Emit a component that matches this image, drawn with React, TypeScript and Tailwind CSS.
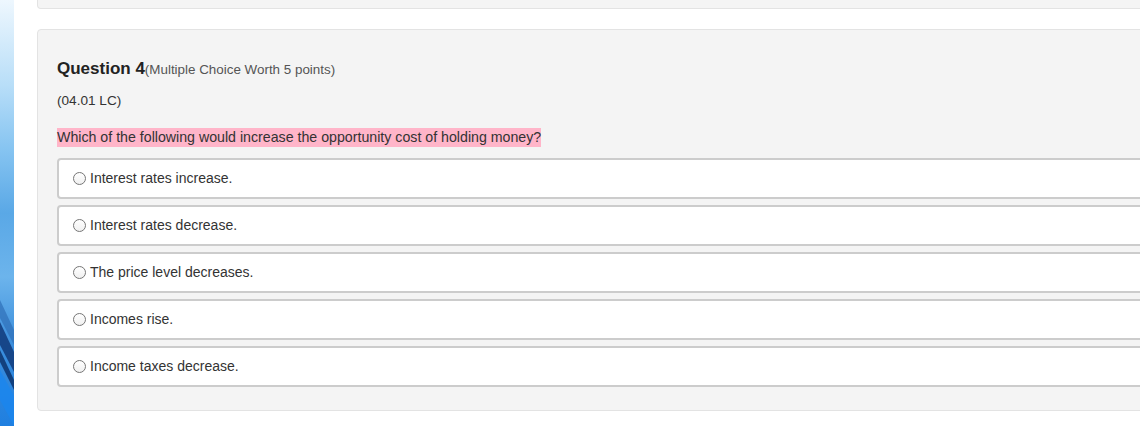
import React from "react";

const options = [
  "Interest rates increase.",
  "Interest rates decrease.",
  "The price level decreases.",
  "Incomes rise.",
  "Income taxes decrease.",
];

function Wallpaper() {
  return (
    <svg width="14" height="426" viewBox="0 0 14 426" className="block">
      <defs>
        <linearGradient id="wp" x1="0" y1="0" x2="0" y2="1">
          <stop offset="0" stopColor="#eef7fe" />
          <stop offset="0.2" stopColor="#b8def8" />
          <stop offset="0.35" stopColor="#86c4f1" />
          <stop offset="0.5" stopColor="#5aa8e6" />
          <stop offset="0.65" stopColor="#6cb4ec" />
          <stop offset="0.8" stopColor="#3d8fdc" />
          <stop offset="1" stopColor="#1f7fe0" />
        </linearGradient>
      </defs>
      <rect width="14" height="426" fill="url(#wp)" />
      <polygon points="0,300 14,330 14,345 0,318" fill="#2f6fb8" opacity="0.7" />
      <polygon points="0,322 14,352 14,372 0,345" fill="#103a7a" opacity="0.85" />
      <polygon points="0,350 14,380 14,390 0,362" fill="#0a2e66" opacity="0.8" />
      <polygon points="0,370 14,396 14,426 0,400" fill="#1a86ee" opacity="0.8" />
    </svg>
  );
}

function Radio() {
  return (
    <span className="inline-block h-[13px] w-[13px] shrink-0 rounded-full border border-[#767676] bg-gradient-to-b from-white to-[#f0f0f0]" />
  );
}

export default function App() {
  return (
    <div className="flex h-[426px] w-[1140px] overflow-hidden bg-white font-['Liberation_Sans',Arial,sans-serif] text-[#333]">
      <div className="h-full w-[14px] shrink-0">
        <Wallpaper />
      </div>
      <div className="ml-[23px] flex shrink-0 flex-col">
        <div className="h-[9px] w-[1200px] rounded-b-[4px] border border-t-0 border-[#e3e3e3] bg-[#f4f4f4]" />
        <div className="mt-[20px] w-[1200px] rounded-[4px] border border-[#e3e3e3] bg-[#f4f4f4] px-[19px] pb-[23px] pt-[27px]">
          <div className="flex items-baseline leading-[24px]">
            <span className="text-[17px] font-bold text-[#222]">Question 4</span>
            <span className="text-[13.4px] text-[#555]">(Multiple Choice Worth 5 points)</span>
          </div>
          <div className="mt-[10px] text-[13.6px] leading-[18px]">(04.01 LC)</div>
          <div className="mt-[17px] leading-[19px]">
            <span className="inline-block bg-[#ffb5c9] text-[14.2px] leading-[19px]">
              Which of the following would increase the opportunity cost of holding money?
            </span>
          </div>
          <div className="mt-[11px] flex flex-col gap-[6px]">
            {options.map((opt) => (
              <div
                key={opt}
                className="flex h-[41px] items-center gap-[4px] rounded-[4px] border-2 border-[#cccccc] bg-white pl-[14px] text-[14px]"
              >
                <Radio />
                <span>{opt}</span>
              </div>
            ))}
          </div>
        </div>
      </div>
    </div>
  );
}
